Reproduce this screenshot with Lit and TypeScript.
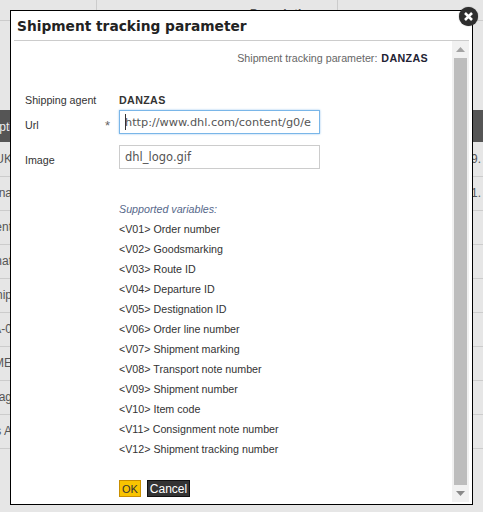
import { LitElement, html, css } from "lit";
import { customElement } from "lit/decorators.js";

const VARS = [
  "<V01> Order number",
  "<V02> Goodsmarking",
  "<V03> Route ID",
  "<V04> Departure ID",
  "<V05> Destignation ID",
  "<V06> Order line number",
  "<V07> Shipment marking",
  "<V08> Transport note number",
  "<V09> Shipment number",
  "<V10> Item code",
  "<V11> Consignment note number",
  "<V12> Shipment tracking number",
];
const ROWS: [string, string][] = [
  ["UK", "9."], ["na", "1."], ["ent", ""], ["nat", ""], ["nip", ""],
  ["A-0", ""], ["ME", ""], ["ag", ""], ["s A", ""],
];

@customElement("app-root")
export class AppRoot extends LitElement {
  static styles = css`
    :host { display: block; position: relative; width: 483px; height: 512px; overflow: hidden; background: #e6e6e6; font-family: "Liberation Sans", Arial, sans-serif; font-size: 10.7px; color: #333; }
    .page { display: flex; flex-direction: column; height: 512px; font-size: 12px; }
    .top { height: 110px; flex: none; display: grid; grid-template-columns: 97px 241px 1fr; align-content: start; }
    .top > div { height: 21px; border-bottom: 1px solid #ccc; border-right: 1px solid #ccc; box-sizing: border-box; }
    .top > div:last-child { border-right: 0; }
    .top .desc { padding: 7px 0 0 153px; line-height: 14px; font-weight: bold; color: #555; white-space: nowrap; }
    .head { height: 32px; margin-bottom: 1px; flex: none; background: #555; color: #eee; line-height: 34px; display: flex; justify-content: space-between; }
    .row { height: 34px; flex: none; box-sizing: border-box; border-bottom: 1px solid #ccc; line-height: 33px; display: flex; justify-content: space-between; color: #555; }
    .clip { width: 12px; display: flex; justify-content: flex-end; white-space: nowrap; }
    .end { margin-right: 2px; }
    .modal { position: absolute; left: 10px; top: 10px; width: 463px; height: 495px; box-sizing: border-box; background: #fff; border: 1px solid #000; display: flex; flex-direction: column; padding: 0 3px 2px 3px; }
    .title { flex: none; height: 30px; box-sizing: border-box; border-bottom: 1px solid #ccc; font-family: "DejaVu Sans", "Liberation Sans", sans-serif; font-size: 13.75px; font-weight: bold; color: #222; line-height: 31px; padding-left: 3px; white-space: nowrap; }
    .body { flex: 1; display: flex; min-height: 0; }
    .content { flex: 1; min-width: 0; display: flex; flex-direction: column; }
    .sub { text-align: right; color: #666; padding: 10px 24px 0 0; height: 14px; line-height: 14px; }
    .sub b { color: #223; letter-spacing: 0.35px; margin-left: 1px; }
    .form { display: grid; grid-template-columns: 94px 1fr; margin-top: 28px; padding-left: 11px; }
    .agent { height: 14px; line-height: 14px; }
    .agent-v { font-weight: bold; letter-spacing: 0.35px; color: #333; height: 14px; line-height: 14px; }
    .f { display: flex; }
    .url { position: relative; padding-top: 12px; }
    .star { position: absolute; right: 9px; top: 11px; font-size: 13px; color: #666; }
    input { box-sizing: border-box; width: 201px; height: 24px; border: 1px solid #ccc; padding: 0 5px; font: 11.5px "DejaVu Sans", sans-serif; color: #555; background: #fff; outline: none; margin: 0; }
    input.focus { border: 1px solid #7ab6e8; box-shadow: 0 0 2px #9cc8ee; font-size: 11.3px; }
    .caret { position: relative; }
    .caret::after { content: ""; position: absolute; left: 6px; top: 4px; width: 1px; height: 16px; background: #333; }
    .gap1 { margin-top: 3px; }
    .gap2 { margin-top: 11px; }
    .img-l { padding-top: 20px; }
    .vars { margin: 30px 0 0 105px; }
    .vars .h { font-style: italic; color: #56688a; height: 20px; line-height: 20px; }
    .vars .v { height: 20px; line-height: 20px; color: #333; white-space: pre; }
    .btns { margin: 21px 0 0 105px; display: flex; gap: 6px; }
    button { font-family: "Liberation Sans", Arial, sans-serif; height: 17px; padding: 0; margin: 0; box-sizing: border-box; cursor: pointer; }
    .ok { width: 22px; background: #f9c400; border: 1px solid #c98f00; color: #333; font-size: 11px; }
    .cancel { width: 43px; background: #333; border: 1px solid #111; color: #fff; font-size: 12px; }
    .sb { flex: none; width: 17px; background: #f1f1f1; display: flex; flex-direction: column; align-items: center; }
    .sb .arrow { flex: none; height: 17px; display: flex; align-items: center; justify-content: center; }
    .sb .thumb { flex: 1; width: 13px; background: #bdbdbd; }
    .close { position: absolute; left: 459px; top: 7px; width: 19px; height: 19px; border-radius: 50%; background: #2e2e2e; display: flex; align-items: center; justify-content: center; box-shadow: 0 0 1px #333; }
  `;

  render() {
    return html`
      <div class="page">
        <div class="top"><div></div><div class="desc">Description</div><div></div></div>
        <div class="head"><span class="clip">pti</span><span></span></div>
        ${ROWS.map(([a, b]) => html`<div class="row"><span class="clip">${a}</span><span class="end">${b}</span></div>`)}
      </div>
      <div class="modal">
        <div class="title">Shipment tracking parameter</div>
        <div class="body">
          <div class="content">
            <div class="sub">Shipment tracking parameter: <b>DANZAS</b></div>
            <div class="form">
              <div class="agent">Shipping agent</div>
              <div class="agent-v">DANZAS</div>
              <div class="url">Url<span class="star">*</span></div>
              <div class="f gap1 caret"><input class="focus" .value=${"http://www.dhl.com/content/g0/e"} readonly /></div>
              <div class="img-l">Image</div>
              <div class="f gap2"><input .value=${"dhl_logo.gif"} readonly /></div>
            </div>
            <div class="vars">
              <div class="h">Supported variables:</div>
              ${VARS.map((v) => html`<div class="v">${v}</div>`)}
            </div>
            <div class="btns">
              <button class="ok">OK</button>
              <button class="cancel">Cancel</button>
            </div>
          </div>
          <div class="sb">
            <div class="arrow"><svg width="9" height="5" viewBox="0 0 9 5"><path d="M4.5 0L9 5H0z" fill="#a3a3a3"/></svg></div>
            <div class="thumb"></div>
            <div class="arrow"><svg width="9" height="5" viewBox="0 0 9 5"><path d="M0 0h9L4.5 5z" fill="#8a8a8a"/></svg></div>
          </div>
        </div>
      </div>
      <div class="close">
        <svg width="11" height="11" viewBox="0 0 11 11"><path d="M2 2l7 7M9 2l-7 7" stroke="#fff" stroke-width="2.6"/></svg>
      </div>
    `;
  }
}
